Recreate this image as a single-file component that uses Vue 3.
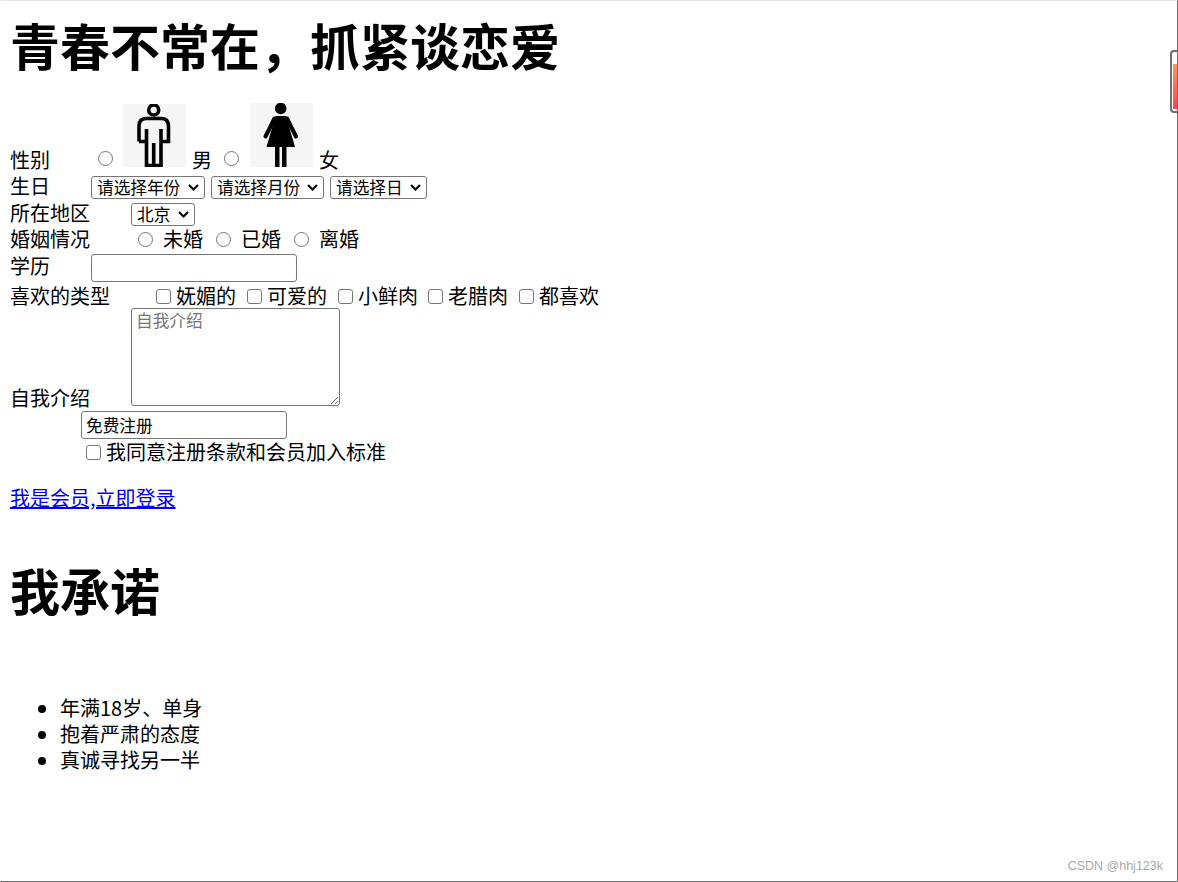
<script setup>
const years = ['请选择年份']
const likes = ['妩媚的', '可爱的', '小鲜肉', '老腊肉', '都喜欢']
const marriage = ['未婚', '已婚', '离婚']
const promises = ['年满18岁、单身', '抱着严肃的态度', '真诚寻找另一半']
</script>

<template>
  <div class="page">
    <h1 class="title">青春不常在，抓紧谈恋爱</h1>
    <form class="form" @submit.prevent>
      <div class="row row-gender">
        <span class="label">性别</span>
        <input class="radio first" type="radio" name="sex" />
        <svg class="pic" viewBox="0 0 63 63" width="63" height="63">
          <rect width="63" height="63" fill="#f5f5f5" />
          <circle cx="30.700" cy="6" r="5" fill="none" stroke="#000" stroke-width="3.600" />
          <path d="M16 37.500V22q0-7.500 7.500-7.500H38q7.500 0 7.500 7.500v15.500H38M16 37.500H23.500M23.500 25V61.500H38V25M30.700 39V62" fill="none" stroke="#000" stroke-width="3.600" />
        </svg>
        <span class="sex-text">男</span>
        <input class="radio second" type="radio" name="sex" />
        <svg class="pic pic-f" viewBox="0 0 63 64" width="63" height="64">
          <rect width="63" height="64" fill="#f5f5f5" />
          <circle cx="30.700" cy="5.500" r="5.800" />
          <path d="M25.500 13H36L45 44H16.500Z" />
          <path d="M24.500 15.500L15.500 33.500M37 15.500L46 33.500" fill="none" stroke="#000" stroke-width="4" stroke-linecap="round" />
          <path d="M25 42H29.500V64H25ZM32 42H36.500V64H32Z" />
        </svg>
        <span class="sex-text">女</span>
      </div>
      <div class="row row-birth">
        <span class="label">生日</span>
        <span class="sel-wrap sel-y">
          <select class="sel"><option v-for="y in years" :key="y">{{ y }}</option></select>
          <svg class="arrow" viewBox="0 0 11 7" width="11" height="7"><path d="M1 1L5.500 5.500L10 1" fill="none" stroke="#000" stroke-width="2" /></svg>
        </span>
        <span class="sel-wrap sel-m">
          <select class="sel"><option>请选择月份</option></select>
          <svg class="arrow" viewBox="0 0 11 7" width="11" height="7"><path d="M1 1L5.500 5.500L10 1" fill="none" stroke="#000" stroke-width="2" /></svg>
        </span>
        <span class="sel-wrap sel-d">
          <select class="sel"><option>请选择日</option></select>
          <svg class="arrow" viewBox="0 0 11 7" width="11" height="7"><path d="M1 1L5.500 5.500L10 1" fill="none" stroke="#000" stroke-width="2" /></svg>
        </span>
      </div>
      <div class="row row-area">
        <span class="label">所在地区</span>
        <span class="sel-wrap sel-c">
          <select class="sel"><option>北京</option></select>
          <svg class="arrow" viewBox="0 0 11 7" width="11" height="7"><path d="M1 1L5.500 5.500L10 1" fill="none" stroke="#000" stroke-width="2" /></svg>
        </span>
      </div>
      <div class="row row-marry">
        <span class="label">婚姻情况</span>
        <label v-for="m in marriage" :key="m" class="opt opt-m">
          <input class="radio" type="radio" name="marry" />
          <span>{{ m }}</span>
        </label>
      </div>
      <div class="row row-edu">
        <span class="label">学历</span>
        <input class="text edu" type="text" />
      </div>
      <div class="row row-like">
        <span class="label">喜欢的类型</span>
        <label v-for="l in likes" :key="l" class="opt opt-l">
          <input class="check" type="checkbox" />
          <span>{{ l }}</span>
        </label>
      </div>
      <div class="row row-intro">
        <span class="label">自我介绍</span>
        <textarea class="intro" placeholder="自我介绍"></textarea>
      </div>
      <div class="row row-btn">
        <input class="text btn" type="text" value="免费注册" />
      </div>
      <div class="row row-agree">
        <label class="opt"><input class="check" type="checkbox" /><span>我同意注册条款和会员加入标准</span></label>
      </div>
      <p class="login"><a href="#">我是会员,立即登录</a></p>
    </form>
    <h1 class="title promise">我承诺</h1>
    <ul class="list">
      <li v-for="p in promises" :key="p">{{ p }}</li>
    </ul>
    <div class="thumb"><div class="fill"></div></div>
    <div class="edge"></div>
    <div class="mark">CSDN @hhj123k</div>
  </div>
</template>

<style>
html, body { margin: 0; overflow: hidden; }
</style>

<style scoped>
.page {
  position: relative;
  box-sizing: border-box;
  width: 1178px;
  height: 882px;
  padding: 0 10px;
  overflow: hidden;
  background: #fff;
  color: #000;
  font-family: "Noto Sans CJK SC", "Liberation Sans", sans-serif;
  font-size: 20px;
  line-height: 26px;
}
.edge {
  position: absolute;
  inset: 0;
  border: 1px solid #6e6e6e;
  border-top-color: #e6e6e6;
  border-left-color: transparent;
  pointer-events: none;
}
.title {
  margin: 0;
  padding-top: 14px;
  height: 83px;
  box-sizing: border-box;
  font-size: 50px;
  line-height: 60px;
  font-weight: 700;
}
.row { display: flex; align-items: flex-start; white-space: nowrap; }
.label { display: block; padding-right: 41px; }
.opt { display: flex; align-items: center; }
input, select, textarea { box-sizing: border-box; margin: 0; font-family: inherit; }
.radio, .check {
  appearance: none;
  flex: none;
  width: 15px;
  height: 15px;
  border: 1.500px solid #767676;
  background: #fff;
}
.radio { border-radius: 50%; }
.check { border-radius: 3px; }
.row-gender { align-items: flex-end; height: 91px; }
.row-gender .label { padding-right: 48px; margin-bottom: 1px; }
.row-gender .radio { margin: 0 0 8px; }
.pic { display: block; margin: 0 6px 7px 10px; }
.pic-f { margin-left: 11px; }
.sex-text { margin-right: 12px; margin-bottom: 1px; }
.sel-wrap { position: relative; display: block; height: 23px; margin-top: 2px; }
.sel {
  appearance: none;
  display: block;
  width: 100%;
  height: 23px;
  font-size: 16.670px;
  line-height: 21px;
  padding: 0 0 0 5px;
  background: #fff;
  color: #000;
  border: 1px solid #767676;
  border-radius: 3px;
}
.arrow { position: absolute; right: 6px; top: 8px; pointer-events: none; }
.row-birth { height: 27px; }
.row-birth .label { margin-top: -1px; height: 26px; }
.sel-y { width: 114px; margin-right: 6px; }
.sel-m { width: 113px; margin-right: 6px; }
.sel-d { width: 97px; }
.row-area { height: 27px; }
.row-area .label { margin-top: -1px; height: 26px; }
.sel-c { width: 64px; }
.row-marry { height: 26px; }
.row-marry .label { padding-right: 43px; margin-top: -2px; }
.row-marry .opt { margin-top: -2px; }
.opt-m { margin-left: 5px; margin-right: 8px; }
.opt-m .radio { margin: 0 10px 0 0; }
.row-edu { height: 31px; }
.row-edu .label { margin-top: -1px; }
.text { font-size: 16.670px; height: 28px; border: 1px solid #767676; border-radius: 3px; padding: 1px 4px; color: #000; background: #fff; }
.edu { width: 206px; display: block; margin-top: 0; }
.row-like { height: 22px; }
.row-like .label { padding-right: 46px; margin-top: -2px; }
.row-like .opt { margin-top: -2px; }
.opt-l { margin-right: 11px; }
.opt-l:nth-of-type(3) { margin-right: 10px; }
.opt-l .check { margin-right: 5px; }
.row-intro { align-items: flex-end; height: 102px; }
.row-intro .label { line-height: 22px; }
.intro { display: block; width: 209px; height: 98px; font-size: 16.670px; line-height: 20px; padding: 1px 4px; border: 1px solid #767676; border-radius: 3px; margin-bottom: 3px; }
.row-btn { height: 29px; padding: 2px 0 0 71px; box-sizing: border-box; }
.btn { width: 206px; display: block; }
.row-agree { height: 27px; padding: 1px 0 0 76px; box-sizing: border-box; }
.row-agree .check { margin-right: 5px; }
.login { margin: 20px 0 0; height: 26px; }
.login a { color: #00e; text-decoration: underline; }
.promise { margin-top: 48px; padding-top: 0; height: 60px; }
.list { margin: 0; padding: 76px 0 0 50px; }
.thumb {
  position: absolute;
  right: 0;
  top: 50px;
  width: 8px;
  height: 63px;
  box-sizing: border-box;
  border: 2px solid #6f6f6f;
  border-right: none;
  border-radius: 4px 0 0 4px;
  padding: 12px 0 0 1px;
  background: #fff;
}
.fill { height: 45px; background: linear-gradient(#ff9a55, #ff4747); }
.mark {
  position: absolute;
  right: 15px;
  bottom: 8px;
  font-family: "Liberation Sans", sans-serif;
  font-size: 12.500px;
  line-height: 15px;
  color: #a8a8a8;
}
</style>
